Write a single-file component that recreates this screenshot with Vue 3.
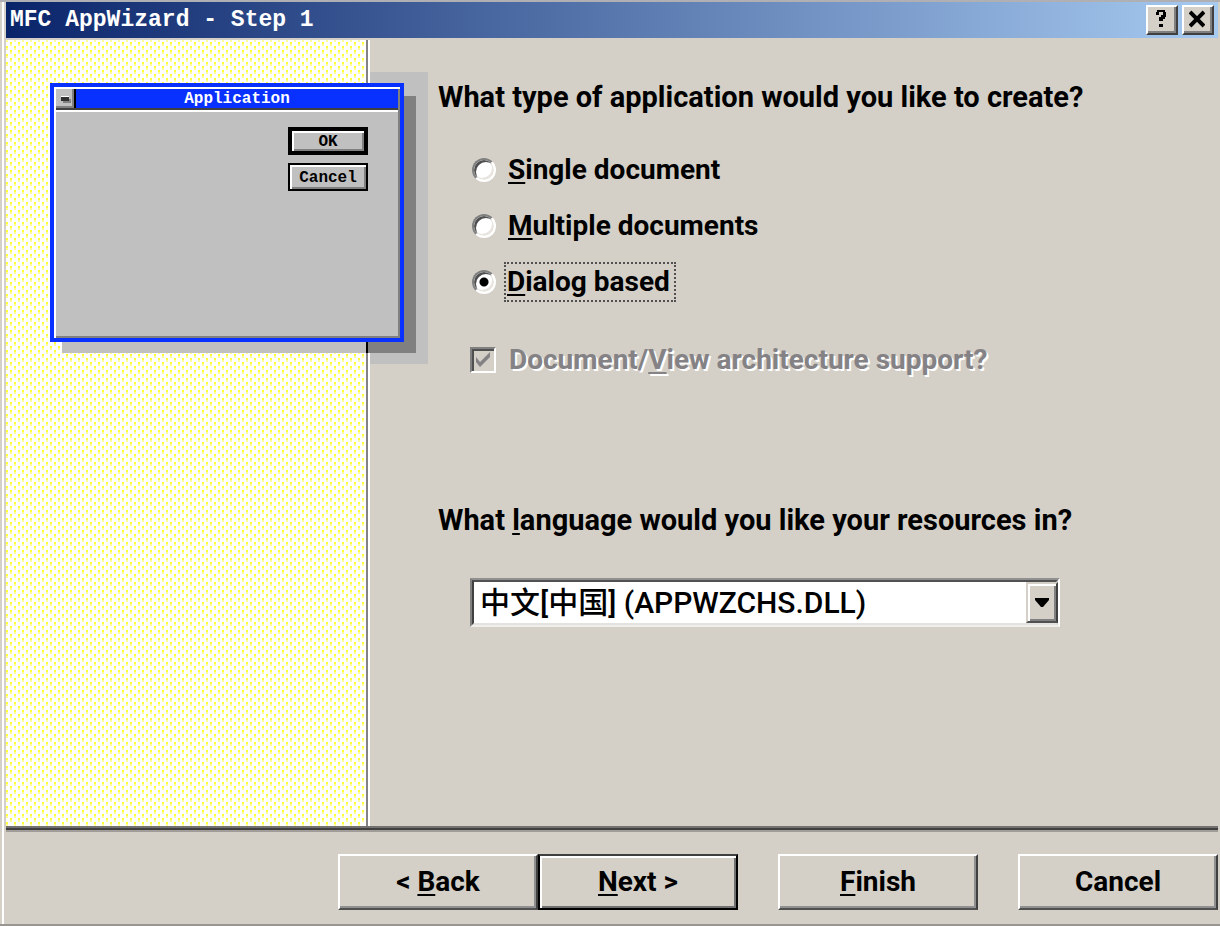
<script setup>
import { ref } from 'vue'

const kinds = [
  { id: 'single', key: 'S', rest: 'ingle document' },
  { id: 'multiple', key: 'M', rest: 'ultiple documents' },
  { id: 'dialog', key: 'D', rest: 'ialog based' },
]
const kind = ref('dialog')
</script>

<template>
  <div class="window">
    <header class="titlebar">
      <h1>MFC AppWizard - Step 1</h1>
      <button class="cap" type="button" aria-label="Help">
        <svg viewBox="0 0 16 20" shape-rendering="crispEdges">
          <path d="M2 2h2V0h8v2h2v6h-2v2h-2v2H6V8h2V6h2V2H6v4H2zM6 15h4v4H6z" />
        </svg>
      </button>
      <button class="cap" type="button" aria-label="Close">
        <svg viewBox="0 0 16 18">
          <path d="M1 2L15 16M15 2L1 16" fill="none" stroke="#000" stroke-width="4" />
        </svg>
      </button>
    </header>

    <main class="body">
      <aside class="side">
        <div class="halo"></div>
        <div class="shade"></div>
        <div class="preview">
          <div class="p-title">
            <span class="p-menu"><i></i></span>
            <span class="p-name">Application</span>
          </div>
          <div class="p-body">
            <span class="p-btn p-ok">OK</span>
            <span class="p-btn">Cancel</span>
          </div>
        </div>
      </aside>

      <form class="form" @submit.prevent>
        <fieldset>
          <legend>What type of application would you like to create?</legend>
          <label v-for="k in kinds" :key="k.id" class="row">
            <input v-model="kind" type="radio" name="kind" :value="k.id" />
            <span class="txt" :class="{ focus: kind === k.id }"><u>{{ k.key }}</u>{{ k.rest }}</span>
          </label>
        </fieldset>
        <label class="row off">
          <span class="box">
            <input type="checkbox" checked disabled />
            <svg viewBox="0 0 16 16"><path d="M1 5v5l4 5L15 5V0L5 10z" /></svg>
          </span>
          <span class="txt">Document/<u>V</u>iew architecture support?</span>
        </label>
        <label class="question" for="lang">What <u>l</u>anguage would you like your resources in?</label>
        <div class="combo">
          <select id="lang">
            <option>中文[中国] (APPWZCHS.DLL)</option>
          </select>
          <span class="drop">
            <svg viewBox="0 0 14 10">
              <path d="M0 0h14v2L8 9H6L0 2z" />
            </svg>
          </span>
        </div>
      </form>
    </main>

    <footer class="actions">
      <button type="button">&lt; <u>B</u>ack</button>
      <button type="button" class="default"><u>N</u>ext &gt;</button>
      <button type="button" class="apart"><u>F</u>inish</button>
      <button type="button" class="apart">Cancel</button>
    </footer>
  </div>
</template>

<style>
body {
  margin: 0;
  background: #d4d0c8;
}
</style>

<style scoped>
* {
  box-sizing: border-box;
}
.window {
  display: flex;
  flex-direction: column;
  min-height: 100vh;
  padding: 0 2px 0 6px;
  border-top: 2px solid #b0afb4;
  border-bottom: 2px solid #999692;
  background: linear-gradient(90deg, #d4d0c8 2px, #fff 2px, #fff 4px, #d4d0c8 4px);
  font: 700 28px/36px Roboto, "Noto Sans CJK SC", sans-serif;
  color: #000;
}
.titlebar {
  display: flex;
  align-items: center;
  gap: 4px;
  height: 36px;
  margin-bottom: 2px;
  padding: 0 4px;
  background: linear-gradient(90deg, #0a246a, #a6caf0);
}
h1 {
  flex: 1;
  margin: 0;
  font: 700 23px/32px "Liberation Mono", monospace;
  color: #fff;
}
.cap {
  display: flex;
  align-items: center;
  justify-content: center;
  width: 32px;
  height: 30px;
  padding: 0;
  border: 2px solid;
  border-color: #fff #404040 #404040 #fff;
  box-shadow: inset -2px -2px #808080;
  background: #d4d0c8;
}
.cap svg {
  width: 16px;
  height: 18px;
  margin: 0 2px 2px 0;
}
.body {
  display: flex;
  flex: 1;
}
.side {
  position: relative;
  width: 364px;
  border-right: 2px solid #fff;
  background:
    linear-gradient(90deg, transparent 360px, #848284 360px),
    conic-gradient(from 270deg at 2px 2px, #ffff33 90deg, transparent 0) 4px 2px / 8px 8px,
    conic-gradient(from 270deg at 2px 2px, #ffff33 90deg, transparent 0) 0 6px / 8px 8px,
    conic-gradient(from 270deg at 2px 4px, #ffff99 90deg, transparent 0) 4px 2px / 8px 8px,
    conic-gradient(from 270deg at 2px 4px, #ffff99 90deg, transparent 0) 0 6px / 8px 8px,
    #fff;
}
.halo,
.shade,
.preview {
  position: absolute;
}
.halo {
  left: 364px;
  top: 32px;
  width: 58px;
  height: 292px;
  background: #c0c0c0;
}
.shade {
  left: 56px;
  top: 56px;
  width: 354px;
  height: 257px;
  background: linear-gradient(90deg, #c0c0c0 304px, #000 304px, #000 306px, #808080 306px);
}
.preview {
  display: flex;
  flex-direction: column;
  left: 44px;
  top: 43px;
  width: 354px;
  height: 259px;
  border: 4px solid #0831ff;
  background: #c0c0c0;
  box-shadow: inset 2px 2px #fff, inset -2px -2px #808080;
  font: 700 16px/22px "Liberation Mono", monospace;
}
.p-title {
  display: flex;
  height: 21px;
  margin: 2px 2px 0;
  border-bottom: 2px solid #404040;
  background: #0831ff;
  color: #fff;
  box-shadow: 0 2px #fff;
}
.p-menu {
  display: flex;
  align-items: center;
  justify-content: center;
  width: 20px;
  border-right: 2px solid #000;
  background: #c0c0c0;
  box-shadow: inset -2px -2px #808080;
}
.p-menu i {
  width: 8px;
  height: 4px;
  background: #303030;
  box-shadow: 0 -1px #fff, 2px 2px #808080;
}
.p-name {
  flex: 1;
  text-align: center;
  line-height: 20px;
}
.p-body {
  display: flex;
  flex-direction: column;
  align-items: flex-end;
  gap: 8px;
  padding: 17px 32px;
}
.p-btn {
  width: 80px;
  height: 28px;
  border: 2px solid #000;
  box-shadow: inset 2px 2px #fff, inset -2px -2px #808080;
  line-height: 26px;
  text-align: center;
}
.p-ok {
  border-width: 4px;
  line-height: 22px;
}
.form {
  flex: 1;
  padding: 39px 20px 20px 68px;
}
fieldset {
  margin: 0;
  padding: 0;
  border: 0;
}
legend {
  padding: 0;
  margin-bottom: 37px;
  font-size: 29px;
}
u {
  text-decoration-thickness: 2px;
  text-underline-offset: 3px;
  text-decoration-skip-ink: none;
}
.row {
  display: flex;
  align-items: center;
  height: 36px;
  margin: 0 0 20px 32px;
}
.txt {
  padding: 0 2px;
  border: 1px solid transparent;
}
.focus {
  border: 2px dotted #505050;
  padding: 0 4px 0 1px;
  margin-left: -1px;
}
input[type="radio"] {
  appearance: none;
  width: 24px;
  height: 24px;
  margin: 0 9px 0 2px;
  border: 2px solid;
  border-color: #808080 #fff #fff #808080;
  border-radius: 50%;
  background: #fff;
  box-shadow: inset 2px 2px #505050, inset -2px -2px #e8e5df;
}
input[type="radio"]:checked {
  background: radial-gradient(circle, #000 4px, #fff 5px);
}
.off {
  margin-top: 22px;
  margin-bottom: 124px;
  color: #848284;
  text-shadow: 2px 2px #fff;
}
.box {
  display: grid;
  margin-right: 10px;
}
.box > * {
  grid-area: 1 / 1;
}
.box input {
  appearance: none;
  width: 26px;
  height: 26px;
  margin: 0;
  border: 2px solid;
  border-color: #808080 #fff #fff #808080;
  box-shadow: inset 2px 2px #505050;
}
.box svg {
  width: 16px;
  height: 16px;
  place-self: center;
  fill: #848284;
}
.question {
  display: block;
  font-size: 29px;
}
.combo {
  display: grid;
  width: 590px;
  max-width: 100%;
  height: 49px;
  margin: 40px 0 0 32px;
  border: 2px solid;
  border-color: #909090 #fff #f0eeea #808080;
  background: #fff;
}
.combo > * {
  grid-area: 1 / 1;
}
select {
  appearance: none;
  width: 100%;
  height: 45px;
  padding: 0 40px 0 6px;
  border: 2px solid;
  border-color: #505050 #d4d0c8 #e4e2de #404040;
  border-radius: 0;
  outline: 0;
  background: #fff;
  color: #000;
  font: 500 30px/36px Roboto, "Noto Sans CJK SC", sans-serif;
}
.drop {
  display: flex;
  align-items: center;
  justify-content: center;
  justify-self: end;
  width: 32px;
  height: 41px;
  margin: 2px 0;
  border: 2px solid;
  border-color: #d4d0c8 #404040 #505050 #d4d0c8;
  background: #d4d0c8;
  box-shadow: inset 2px 2px #fff, inset -2px -2px #808080;
  pointer-events: none;
}
.drop svg {
  width: 14px;
  height: 10px;
}
.actions {
  display: flex;
  justify-content: flex-end;
  padding: 26px 0 14px;
  border-top: 2px solid #747270;
  box-shadow: inset 0 2px #404040, inset 0 4px #a09c98;
}
.actions button {
  width: 200px;
  height: 56px;
  padding: 0;
  border: 2px solid;
  border-color: #fff #404040 #505050 #fff;
  background: #d4d0c8;
  box-shadow: inset -2px -2px #909090;
  color: #000;
  font: inherit;
}
.actions .default {
  border-color: #404040 #000 #000 #000;
  box-shadow: inset 2px 2px #fff, inset -2px -2px #707070;
}
.actions .apart {
  margin-left: 40px;
}
</style>
